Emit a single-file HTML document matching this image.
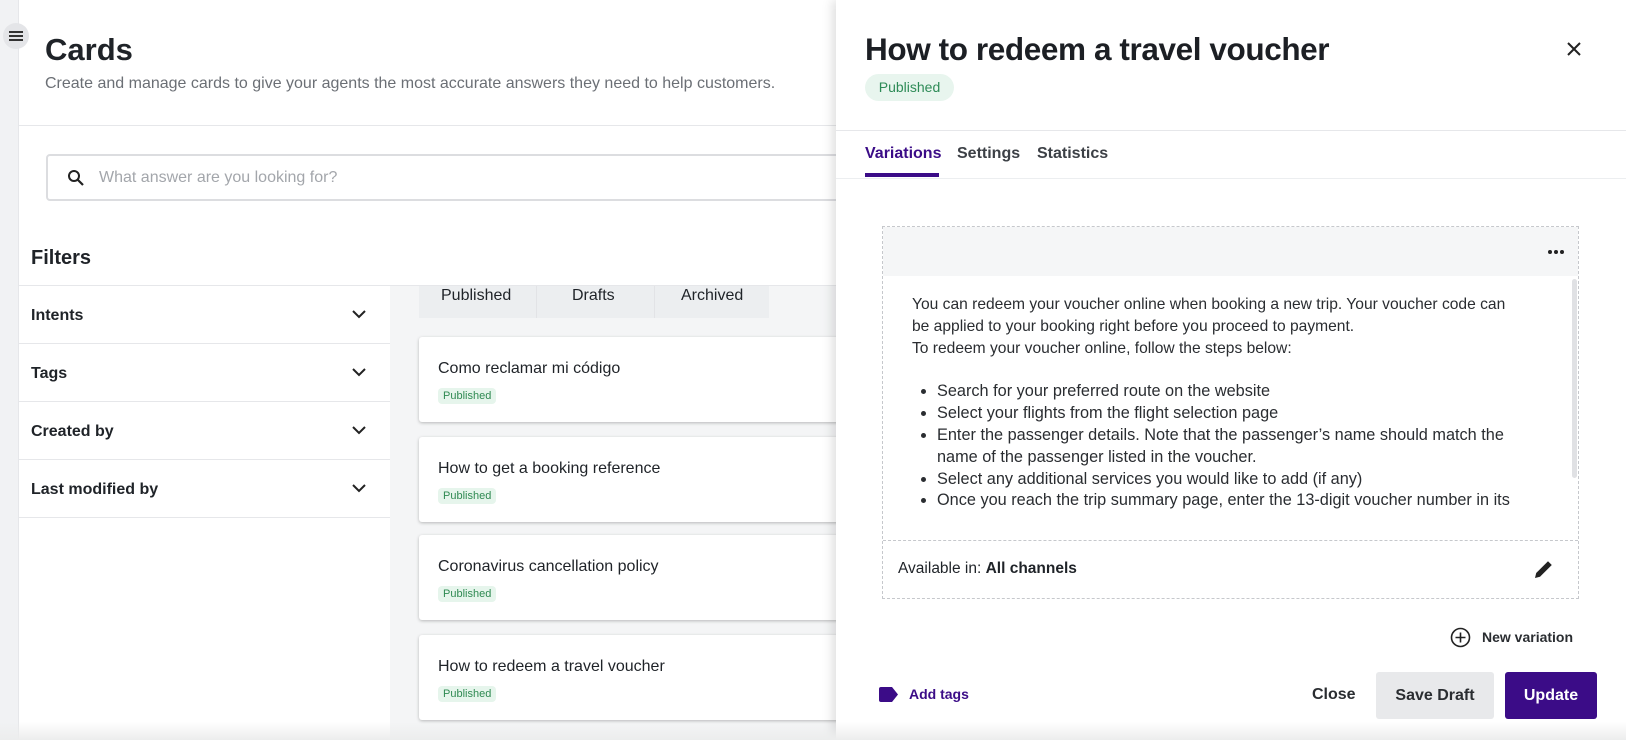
<!DOCTYPE html>
<html><head><meta charset="utf-8"><style>
*{box-sizing:border-box;margin:0;padding:0}
body{width:1626px;height:740px;overflow:hidden;position:relative;background:#fff;font-family:"Liberation Sans",sans-serif;color:#1f2328}
.abs{position:absolute}
.side{left:0;top:0;width:19px;height:740px;background:#f1f2f4;border-right:1px solid #e6e7ea}
.menu{left:3px;top:23px;width:26px;height:26px;border-radius:50%;background:#e4e5e8}
.menu i{position:absolute;left:6px;width:14px;height:2px;background:#333}
.badge{background:#e6f5ec;color:#2f8a52;font-size:11px;padding:2px 5px;border-radius:4px;display:inline-block}
.frow{left:19px;width:371px;height:58px;border-bottom:1px solid #e6e7ea;font-size:16px;font-weight:bold;padding:21px 12px 0}
.chev{position:absolute;right:24px;top:23px}
.card{left:419px;width:440px;height:85px;background:#fff;border-radius:3px;box-shadow:0 1px 3px rgba(0,0,0,.25);padding:23px 19px}
.card div{font-size:16px;margin-bottom:8px}
.panel{left:836px;top:0;width:790px;height:740px;background:#fff;box-shadow:-4px 0 10px rgba(0,0,0,.12)}
ul{list-style:disc;padding-left:25px}
</style></head><body>
<div class="abs side"></div>
<div class="abs menu"><i style="top:8px"></i><i style="top:12px"></i><i style="top:16px"></i></div>
<div class="abs" style="left:45px;top:32px;font-size:31px;font-weight:bold">Cards</div>
<div class="abs" style="left:45px;top:75px;font-size:16px;color:#6b6f75">Create and manage cards to give your agents the most accurate answers they need to help customers.</div>
<div class="abs" style="left:19px;top:125px;width:820px;height:1px;background:#e6e7ea"></div>
<div class="abs" style="left:46px;top:154px;width:800px;height:47px;border:2px solid #dcdde0;border-radius:4px"></div>
<svg class="abs" style="left:67px;top:169px" width="18" height="18" viewBox="0 0 18 18"><circle cx="7" cy="7" r="5" fill="none" stroke="#222" stroke-width="2"/><path d="M11 11l5 5" stroke="#222" stroke-width="2.2"/></svg>
<div class="abs" style="left:99px;top:169px;font-size:16px;color:#a3a6ab">What answer are you looking for?</div>
<div class="abs" style="left:31px;top:247px;font-size:20px;font-weight:bold">Filters</div>
<div class="abs" style="left:19px;top:285px;width:820px;height:1px;background:#e6e7ea"></div>
<div class="abs" style="left:390px;top:286px;width:450px;height:454px;background:#f4f5f6"></div>
<div class="abs frow" style="top:286px">Intents<svg class="chev" width="14" height="10"><path d="M1 2l6 6 6-6" fill="none" stroke="#222" stroke-width="2"/></svg></div>
<div class="abs frow" style="top:344px">Tags<svg class="chev" width="14" height="10"><path d="M1 2l6 6 6-6" fill="none" stroke="#222" stroke-width="2"/></svg></div>
<div class="abs frow" style="top:402px">Created by<svg class="chev" width="14" height="10"><path d="M1 2l6 6 6-6" fill="none" stroke="#222" stroke-width="2"/></svg></div>
<div class="abs frow" style="top:460px">Last modified by<svg class="chev" width="14" height="10"><path d="M1 2l6 6 6-6" fill="none" stroke="#222" stroke-width="2"/></svg></div>
<div class="abs" style="left:419px;top:286px;width:350px;height:32px;background:#eceef0;font-size:16px">
<span class="abs" style="left:22px;top:1px">Published</span><span class="abs" style="left:117px;top:0;width:1px;height:32px;background:#e2e3e6"></span><span class="abs" style="left:153px;top:1px">Drafts</span><span class="abs" style="left:235px;top:0;width:1px;height:32px;background:#e2e3e6"></span><span class="abs" style="left:262px;top:1px">Archived</span></div>
<div class="abs card" style="top:337px"><div>Como reclamar mi código</div><span class="badge">Published</span></div>
<div class="abs card" style="top:437px"><div>How to get a booking reference</div><span class="badge">Published</span></div>
<div class="abs card" style="top:535px"><div>Coronavirus cancellation policy</div><span class="badge">Published</span></div>
<div class="abs card" style="top:635px"><div>How to redeem a travel voucher</div><span class="badge">Published</span></div>

<div class="abs panel">
<div class="abs" style="left:29px;top:31px;font-size:31.5px;font-weight:bold;color:#1c1f24;letter-spacing:-0.4px">How to redeem a travel voucher</div>
<svg class="abs" style="left:731px;top:42px" width="14" height="14"><path d="M1 1l12 12M13 1L1 13" stroke="#222" stroke-width="2"/></svg>
<div class="abs" style="left:29px;top:74px;width:89px;height:27px;border-radius:14px;background:#e8f5ee;color:#2e8b57;font-size:14px;text-align:center;line-height:27px">Published</div>
<div class="abs" style="left:0;top:130px;width:790px;height:1px;background:#e6e7ea"></div>
<div class="abs" style="left:29px;top:145px;font-size:16px;font-weight:bold;color:#3b0c87">Variations</div>
<div class="abs" style="left:121px;top:145px;font-size:16px;font-weight:bold;color:#3c4046">Settings</div>
<div class="abs" style="left:201px;top:145px;font-size:16px;font-weight:bold;color:#3c4046">Statistics</div>
<div class="abs" style="left:29px;top:173px;width:74px;height:4px;background:#3b0c87"></div>
<div class="abs" style="left:0;top:178px;width:790px;height:1px;background:#eceef0"></div>
<div class="abs" style="left:46px;top:226px;width:697px;height:373px;border:1px dashed #c6c8cc">
<div class="abs" style="left:0;top:0;width:695px;height:49px;background:#f5f6f7"></div>
<svg class="abs" style="left:664px;top:22px" width="18" height="6"><circle cx="3" cy="3" r="2" fill="#222"/><circle cx="9" cy="3" r="2" fill="#222"/><circle cx="15" cy="3" r="2" fill="#222"/></svg>
<div class="abs" style="left:689px;top:52px;width:5px;height:199px;background:#e0e1e4;border-radius:3px"></div>
<div class="abs" style="left:29px;top:67px;width:602px;font-size:15.6px;line-height:21.8px;color:#2a2d31">You can redeem your voucher online when booking a new trip. Your voucher code can be applied to your booking right before you proceed to payment.<br>To redeem your voucher online, follow the steps below:<br><ul style="margin-top:22px;width:606px;font-size:16.3px;line-height:21.8px"><li>Search for your preferred route on the website</li><li>Select your flights from the flight selection page</li><li>Enter the passenger details. Note that the passenger’s name should match the name of the passenger listed in the voucher.</li><li>Select any additional services you would like to add (if any)</li><li>Once you reach the trip summary page, enter the 13-digit voucher number in its</li></ul></div>
<div class="abs" style="left:0;top:313px;width:695px;height:1px;border-top:1px dashed #c6c8cc;background:#fff"></div>
<div class="abs" style="left:0;top:314px;width:695px;height:57px;background:#fff"></div>
<div class="abs" style="left:15px;top:333px;font-size:15.5px">Available in: <b>All channels</b></div>
<svg class="abs" style="left:650px;top:331px" width="22" height="22" viewBox="0 0 22 22"><path d="M2 20l1.2-5L15 3.2l3.8 3.8L7 18.8z" fill="#222"/></svg>
</div>
<svg class="abs" style="left:614px;top:627px" width="21" height="21"><circle cx="10.5" cy="10.5" r="9" fill="none" stroke="#222" stroke-width="1.6"/><path d="M10.5 5.5v10M5.5 10.5h10" stroke="#222" stroke-width="1.6"/></svg>
<div class="abs" style="left:646px;top:629px;font-size:14px;font-weight:bold;color:#2a2d31">New variation</div>
<svg class="abs" style="left:43px;top:687px" width="20" height="15"><path d="M0 2q0-2 2-2h11l6 7.5-6 7.5H2q-2 0-2-2z" fill="#3b0c87"/></svg>
<div class="abs" style="left:73px;top:686px;font-size:14px;font-weight:bold;color:#3b0c87">Add tags</div>
<div class="abs" style="left:476px;top:686px;font-size:16px;font-weight:bold;color:#2a2d31">Close</div>
<div class="abs" style="left:540px;top:672px;width:118px;height:47px;background:#e8e9eb;border-radius:3px;font-size:16px;font-weight:bold;text-align:center;line-height:47px;color:#2a2d31">Save Draft</div>
<div class="abs" style="left:669px;top:672px;width:92px;height:47px;background:#3b0c87;border-radius:3px;font-size:16px;font-weight:bold;text-align:center;line-height:47px;color:#fff">Update</div>
</div>
<div class="abs" style="left:0;top:722px;width:1626px;height:18px;background:linear-gradient(#fff0,#eceded)"></div>
</body></html>
